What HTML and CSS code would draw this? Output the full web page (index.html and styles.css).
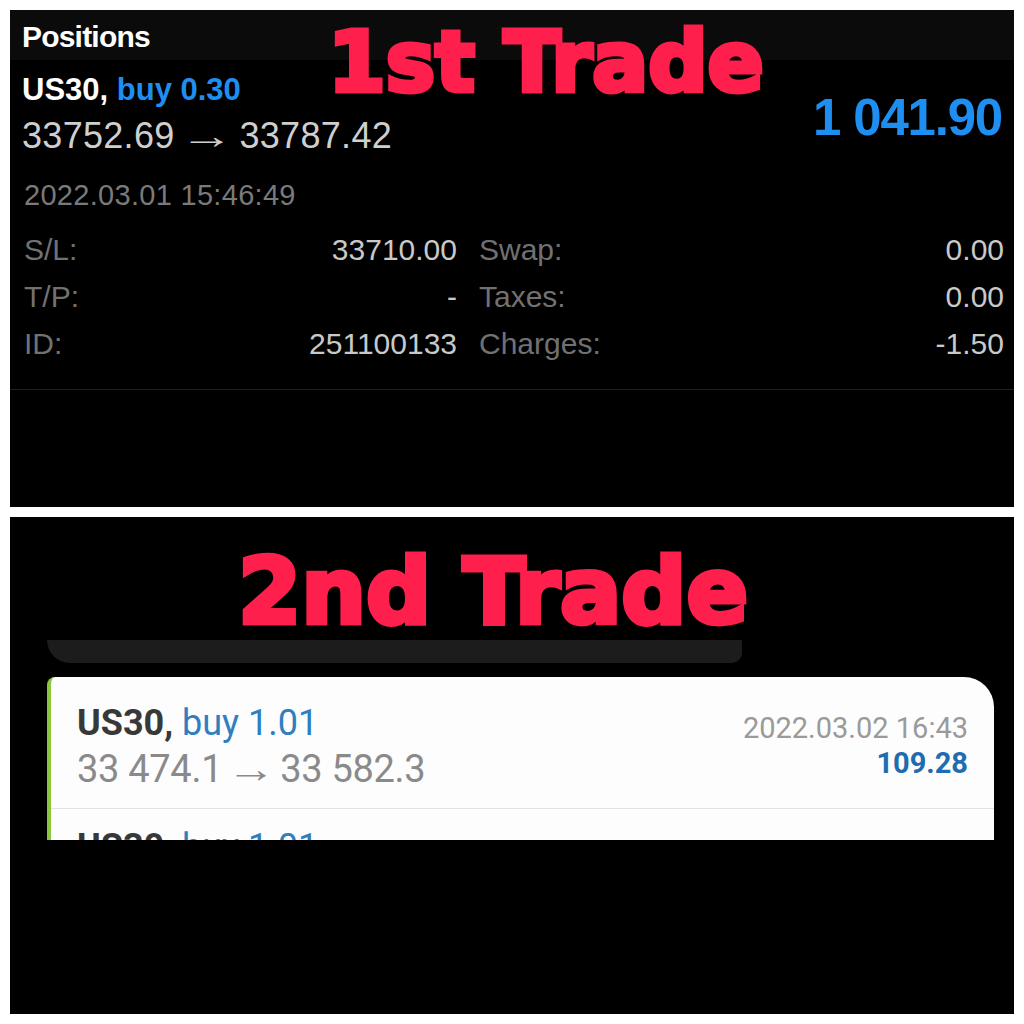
FILE: index.html
```html
<!DOCTYPE html>
<html lang="en">
<head>
    <meta charset="UTF-8">
    <meta name="viewport" content="width=device-width, initial-scale=1.0">
    <title>Trades</title>
    <link rel="stylesheet" href="styles.css">
</head>
<body>
    <div class="panel panel-first">
        <div class="pos-header">Positions</div>

        <div class="pos-main">
            <div class="pos-left">
                <div class="pos-symbol">US30, <span class="buy">buy 0.30</span></div>
                <div class="pos-price">33752.69 <span class="arrow">→</span> 33787.42</div>
            </div>
            <div class="pos-profit">1 041.90</div>
        </div>

        <div class="pos-date">2022.03.01 15:46:49</div>

        <div class="pos-details">
            <div class="pair"><span class="label">S/L:</span><span class="value">33710.00</span></div>
            <div class="pair"><span class="label">Swap:</span><span class="value">0.00</span></div>
            <div class="pair"><span class="label">T/P:</span><span class="value">-</span></div>
            <div class="pair"><span class="label">Taxes:</span><span class="value">0.00</span></div>
            <div class="pair"><span class="label">ID:</span><span class="value">251100133</span></div>
            <div class="pair"><span class="label">Charges:</span><span class="value">-1.50</span></div>
        </div>

        <div class="divider"></div>

        <div class="stamp stamp-first">1st Trade</div>
    </div>

    <div class="panel panel-second">
        <div class="dark-bar"></div>

        <div class="trade-card">
            <div class="trade-row">
                <div class="trade-left">
                    <div class="trade-symbol"><b>US30,</b> <span class="buy">buy 1.01</span></div>
                    <div class="trade-price">33 474.1 <span class="arrow">→</span> 33 582.3</div>
                </div>
                <div class="trade-right">
                    <div class="trade-date">2022.03.02 16:43</div>
                    <div class="trade-profit">109.28</div>
                </div>
            </div>
            <div class="trade-row trade-row-next">
                <div class="trade-left">
                    <div class="trade-symbol"><b>US30,</b> <span class="buy">buy 1.01</span></div>
                </div>
            </div>
        </div>

        <div class="stamp stamp-second">2nd Trade</div>
    </div>
</body>
</html>
```

FILE: styles.css
```css
body {
    margin: 0;
    padding: 10px;
    background: #ffffff;
    font-family: "Liberation Sans", Arial, sans-serif;
}

.panel {
    position: relative;
    height: 497px;
    background: #000;
    overflow: hidden;
}
.panel-first {
    margin-bottom: 10px;
}

/* first trade: dark MT5 position view */
.pos-header {
    height: 47px;
    padding: 3px 12px 0;
    line-height: 47px;
    background: #0b0b0b;
    color: #fff;
    font-size: 30px;
    font-weight: bold;
    letter-spacing: -0.8px;
}

.pos-main {
    display: flex;
    justify-content: space-between;
    padding: 12px 12px 0;
}
.pos-symbol {
    line-height: 36px;
    font-size: 31px;
    font-weight: bold;
    color: #fff;
}
.buy {
    color: #1f8ef1;
}
.pos-price {
    margin-top: 6px;
    line-height: 44px;
    font-size: 36px;
    letter-spacing: 0.3px;
    color: #cfcfcf;
}
.arrow {
    display: inline-block;
    transform: scaleX(1.5);
    margin: 0 4px;
}
.pos-profit {
    margin-top: 21px;
    line-height: 50px;
    font-size: 51px;
    font-weight: bold;
    letter-spacing: -1.2px;
    color: #1f8ef1;
}

.pos-date {
    margin-top: 19px;
    padding: 0 14px;
    line-height: 36px;
    font-size: 29px;
    letter-spacing: 0.3px;
    color: #7a7a7a;
}

.pos-details {
    display: grid;
    grid-template-columns: 433px 525px;
    column-gap: 22px;
    margin-top: 13px;
    padding: 0 12px 0 14px;
    font-size: 30px;
    line-height: 47px;
}
.pair {
    display: flex;
    justify-content: space-between;
}
.label {
    color: #717171;
}
.value {
    color: #c9c9c9;
}

.divider {
    margin-top: 22px;
    height: 1px;
    background: #1f1f1f;
}

/* red captions stamped over the screenshots */
.stamp {
    position: absolute;
    font-family: "DejaVu Sans", sans-serif;
    font-weight: bold;
    color: #ff1f4d;
    -webkit-text-stroke: 5px #ff1f4d;
    white-space: nowrap;
}
.stamp-first {
    top: 11px;
    left: 318px;
    font-size: 83px;
    line-height: 83px;
}
.stamp-second {
    top: 29px;
    left: 228px;
    font-size: 91px;
    line-height: 91px;
}

/* second trade: light android list */
.panel-second {
    padding: 123px 0 0 37px;
    box-sizing: border-box;
}
.dark-bar {
    width: 695px;
    height: 23px;
    margin-bottom: 14px;
    background: #1c1c1c;
    border-radius: 0 0 12px 28px;
}

.trade-card {
    width: 943px;
    height: 163px;
    overflow: hidden;
    background: #fdfdfd;
    border-left: 4px solid #8dc63f;
    border-radius: 8px 30px 0 0;
    font-family: Roboto, "Noto Sans", sans-serif;
}
.trade-row {
    display: flex;
    justify-content: space-between;
    height: 107px;
    padding: 24px 26px 0;
    border-bottom: 1px solid #e2e2e2;
}
.trade-row-next {
    padding-top: 16px;
    border-bottom: none;
}
.trade-symbol {
    line-height: 44px;
    font-size: 36px;
    color: #2f7fc0;
}
.trade-symbol b {
    color: #383838;
}
.trade-symbol .buy {
    color: #2f7fc0;
}
.trade-price {
    margin-top: 1px;
    line-height: 46px;
    font-size: 38px;
    letter-spacing: -0.3px;
    color: #8a8a8a;
}
.trade-price .arrow {
    margin: 0 1px;
    transform: scaleX(1.3);
}
.trade-right {
    margin-top: 9px;
    text-align: right;
}
.trade-date {
    line-height: 36px;
    font-size: 29px;
    color: #9a9a9a;
}
.trade-profit {
    line-height: 34px;
    font-size: 29px;
    font-weight: bold;
    color: #1f6cb0;
}
```
